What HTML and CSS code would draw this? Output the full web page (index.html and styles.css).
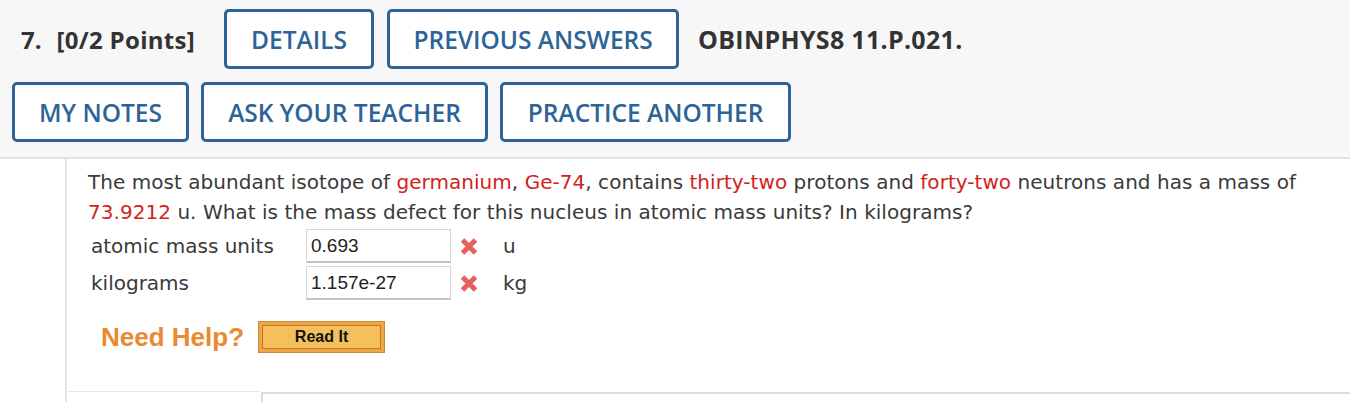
FILE: index.html
```html
<!DOCTYPE html>
<html>
<head>
<meta charset="utf-8">
<link rel="stylesheet" href="styles.css">
</head>
<body>
<div class="header">
  <div class="row row1">
    <span class="qnum">7.</span>
    <span class="points">[0/2 Points]</span>
    <span class="btn btn-details">DETAILS</span>
    <span class="btn btn-prev">PREVIOUS ANSWERS</span>
    <span class="code">OBINPHYS8 11.P.021.</span>
  </div>
  <div class="row row2">
    <span class="btn btn-notes">MY NOTES</span>
    <span class="btn btn-ask">ASK YOUR TEACHER</span>
    <span class="btn btn-practice">PRACTICE ANOTHER</span>
  </div>
</div>
<div class="main">
  <div class="gutter"></div>
  <div class="content">
    <div class="question">
      <p class="text">The most abundant isotope of <span class="red">germanium</span>, <span class="red">Ge-74</span>, contains <span class="red">thirty-two</span> protons and <span class="red">forty-two</span> neutrons and has a mass of <span class="red">73.9212</span> u. What is the mass defect for this nucleus in atomic mass units? In kilograms?</p>
      <div class="answers">
        <div class="arow">
          <span class="label">atomic mass units</span>
          <span class="input">0.693</span>
          <svg class="xicon" width="22" height="21" viewBox="0 0 22 21"><path d="M4.5 4 L17.5 17 M17.5 4 L4.5 17" stroke="#e6605e" stroke-width="5" stroke-linecap="butt"/></svg>
          <span class="unit">u</span>
        </div>
        <div class="arow">
          <span class="label">kilograms</span>
          <span class="input">1.157e-27</span>
          <svg class="xicon" width="22" height="21" viewBox="0 0 22 21"><path d="M4.5 4 L17.5 17 M17.5 4 L4.5 17" stroke="#e6605e" stroke-width="5" stroke-linecap="butt"/></svg>
          <span class="unit">kg</span>
        </div>
      </div>
      <div class="help">
        <span class="needhelp">Need Help?</span>
        <span class="readit"><span class="readit-inner">Read It</span></span>
      </div>
    </div>
    <div class="bottom">
      <div class="bleft"></div>
      <div class="bright"></div>
    </div>
  </div>
</div>
</body>
</html>
```
FILE: styles.css
```css
html, body {
  margin: 0;
  padding: 0;
  background: #ffffff;
}
body {
  width: 1350px;
  height: 402px;
  overflow: hidden;
}
.header {
  background: #f7f7f7;
  border-bottom: 2px solid #e3e3e3;
  padding: 9px 0 14px 0;
  box-sizing: border-box;
  height: 159px;
}
.row {
  display: flex;
  align-items: center;
}
.row1 {
  padding-left: 21px;
  height: 60px;
}
.row2 {
  margin-top: 13px;
  padding-left: 12px;
  height: 60px;
}
.qnum, .points, .code {
  font-family: "Open Sans", sans-serif;
  font-weight: 700;
  font-size: 24px;
  color: #333333;
}
.points {
  margin-left: 15px;
  margin-right: 29px;
  letter-spacing: 0.3px;
}
.code {
  margin-left: 19px;
  font-size: 25px;
  letter-spacing: 0.3px;
}
.btn {
  box-sizing: border-box;
  height: 60px;
  display: flex;
  align-items: center;
  justify-content: center;
  border: 3px solid #2d6497;
  border-radius: 5px;
  font-family: "Open Sans", sans-serif;
  font-weight: 600;
  font-size: 24.5px;
  color: #2d6497;
  background: #ffffff;
}
.btn-details { width: 150px; }
.btn-prev { width: 292px; margin-left: 13px; }
.btn-notes { width: 177px; }
.btn-ask { width: 287px; margin-left: 12px; }
.btn-practice { width: 291px; margin-left: 12px; }

.main {
  display: flex;
  height: 243px;
}
.gutter {
  width: 65px;
  flex: none;
}
.content {
  flex: 1;
  border-left: 2px solid #e3e3e3;
  display: flex;
  flex-direction: column;
}
.question {
  height: 232px;
  padding-left: 21px;
  padding-top: 8px;
  box-sizing: border-box;
}
.text {
  margin: 0;
  font-family: "DejaVu Sans", Verdana, sans-serif;
  font-size: 20px;
  letter-spacing: 0.04px;
  line-height: 30px;
  color: #3a3a3a;
  width: 1240px;
}
.red {
  color: #d2221c;
}
.answers {
  margin-top: 2px;
  display: flex;
  flex-direction: column;
  gap: 3px;
}
.arow {
  display: flex;
  align-items: center;
  height: 34px;
}
.label {
  width: 215px;
  padding-left: 3px;
  font-family: "DejaVu Sans", Verdana, sans-serif;
  font-size: 20px;
  color: #3a3a3a;
}
.input {
  box-sizing: border-box;
  width: 145px;
  height: 34px;
  border: 1px solid #d6d6d6;
  border-bottom: 2px solid #c4c4c4;
  display: flex;
  align-items: center;
  padding-left: 4px;
  font-family: "Liberation Sans", Arial, sans-serif;
  font-size: 19px;
  color: #222222;
  background: #ffffff;
}
.xicon {
  margin-left: 7px;
  flex: none;
}
.unit {
  margin-left: 23px;
  font-family: "DejaVu Sans", Verdana, sans-serif;
  font-size: 20px;
  color: #3a3a3a;
}
.help {
  display: flex;
  align-items: center;
  margin-top: 21px;
  padding-left: 13px;
}
.needhelp {
  font-family: "Liberation Sans", Arial, sans-serif;
  font-weight: 700;
  font-size: 26px;
  color: #e88a30;
}
.readit {
  margin-left: 14px;
  box-sizing: border-box;
  width: 127px;
  height: 32px;
  border: 1px solid #c9893a;
  background: #f0a642;
  padding: 3px;
  display: flex;
}
.readit-inner {
  flex: 1;
  background: #f5c05c;
  border: 1px solid #b87a2c;
  display: flex;
  align-items: center;
  justify-content: center;
  font-family: "Liberation Sans", Arial, sans-serif;
  font-weight: 700;
  font-size: 16px;
  color: #111111;
}
.bottom {
  display: flex;
  flex: 1;
}
.bleft {
  width: 194px;
  border-top: 1px solid #e8e8e8;
}
.bright {
  flex: 1;
  margin-top: 1px;
  border-top: 2px solid #dcdcdc;
  border-left: 2px solid #dcdcdc;
}
```
